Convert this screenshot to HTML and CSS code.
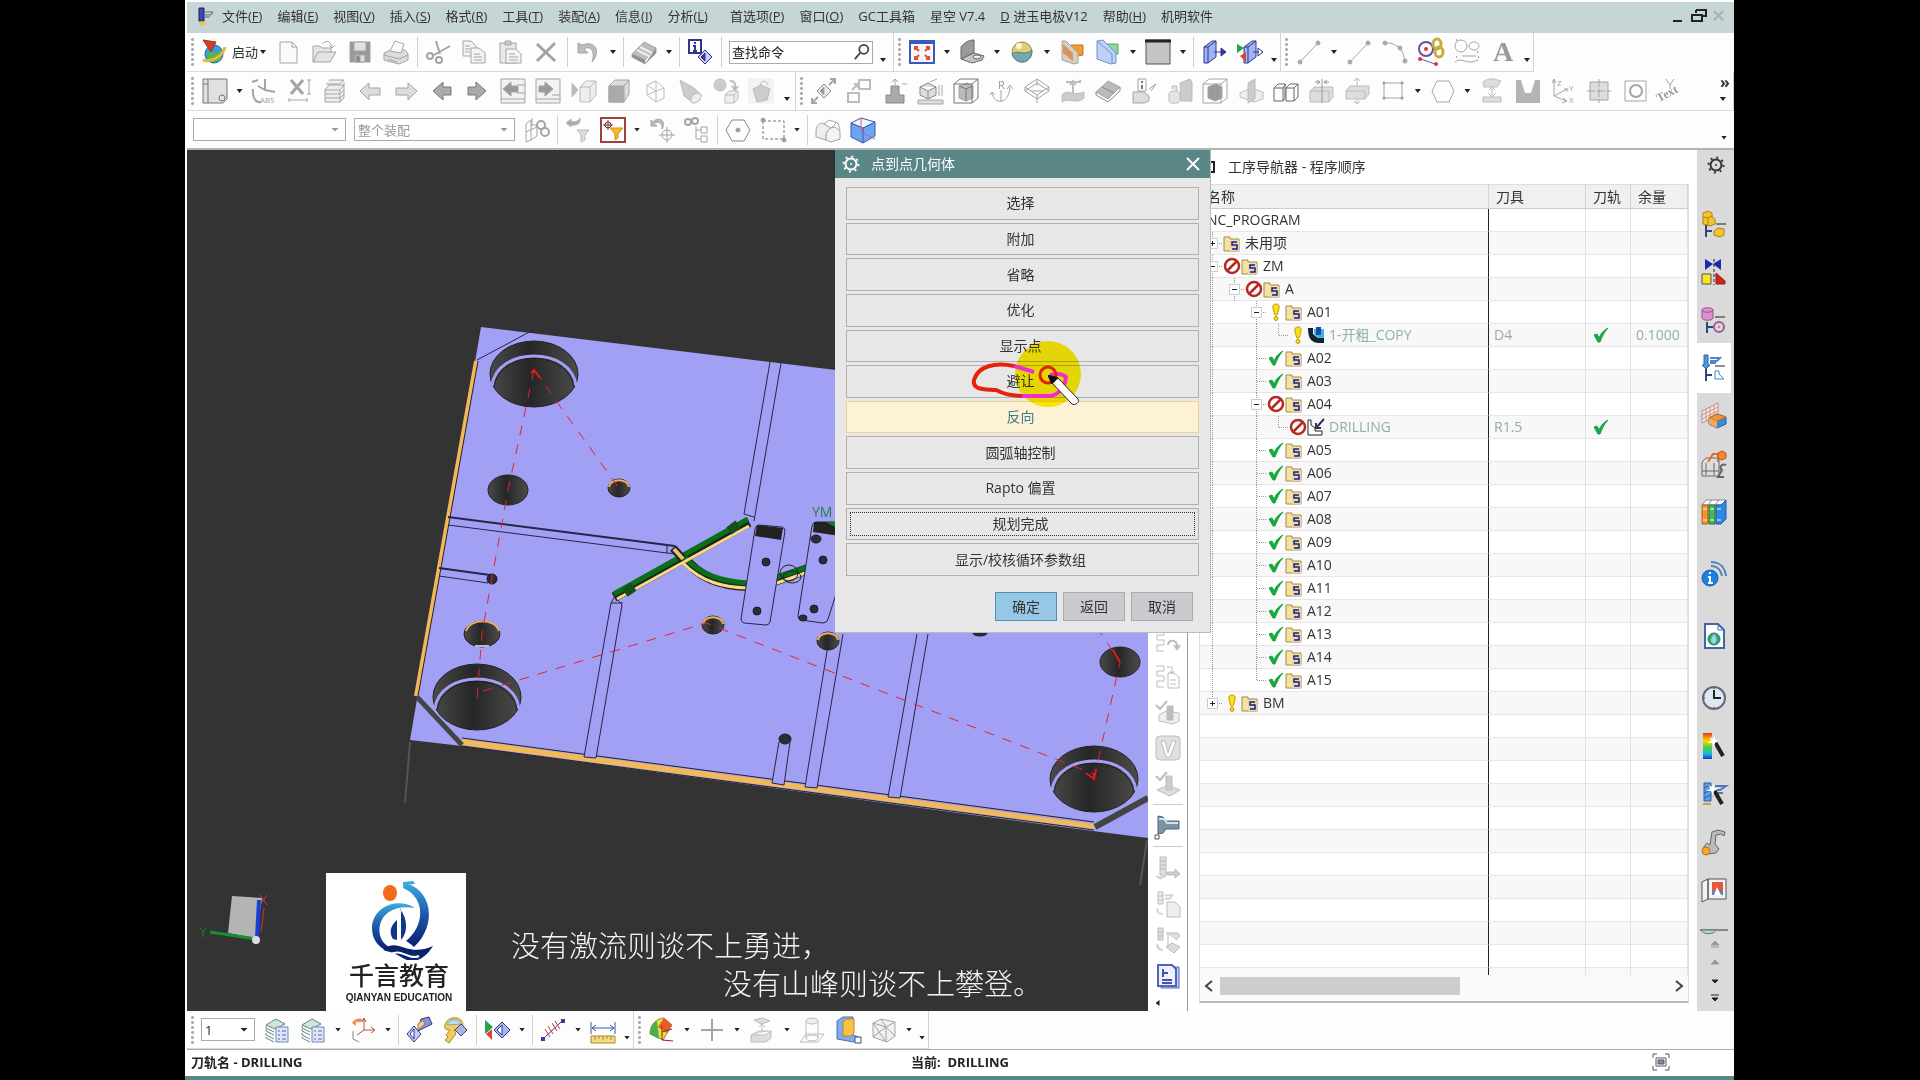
FILE: index.html
```html
<!DOCTYPE html>
<html lang="zh-CN">
<head>
<meta charset="utf-8">
<title>点到点几何体</title>
<link rel="stylesheet" href="styles.css">
</head>
<body>
<svg class="defs" aria-hidden="true">
  <defs>
    <linearGradient id="hole" x1="0" x2="1"><stop offset="0" stop-color="#4a4a4a"/><stop offset=".45" stop-color="#262626"/><stop offset="1" stop-color="#4c4c4c"/></linearGradient>
    <linearGradient id="arcblue" x1="0" y1="0" x2="0" y2="1"><stop offset="0" stop-color="#3fa9dc"/><stop offset=".5" stop-color="#1b58a8"/><stop offset="1" stop-color="#081f74"/></linearGradient>
    <linearGradient id="rainbow" x1="0" y1="0" x2="0" y2="1"><stop offset="0" stop-color="#e33a1c"/><stop offset=".3" stop-color="#ffd400"/><stop offset=".55" stop-color="#4ad03c"/><stop offset=".8" stop-color="#18b6e8"/><stop offset="1" stop-color="#1338c8"/></linearGradient>
    <g id="bighole"><ellipse rx="44" ry="33" fill="url(#hole)" stroke="#222"/><path d="M-42 12C-38-28 38-28 42 12" fill="none" stroke="#a2a0f4" stroke-width="3"/><path d="M-40 13C-34-25 34-25 40 13" fill="none" stroke="#222"/></g>
    <g id="midhole"><ellipse rx="20" ry="15" fill="url(#hole)" stroke="#222"/></g>
    <g id="smallhole"><ellipse rx="11" ry="9" fill="url(#hole)" stroke="#222"/><path d="M-10-1C-9-10 9-10 10-1" fill="none" stroke="#e8b060" stroke-width="2"/></g>
  </defs>
  <symbol id="folder" viewBox="0 0 18 18"><path d="M1 3h6v2h9v12H1z" fill="#f5e2a0" stroke="#a48a4c"/><path d="M7 7h9v10H7z" fill="#e8d9a4"/><path d="M14 8H9v3h5v4H9M10 11h4" fill="none" stroke="#1c1c8c" stroke-width="1.500"/></symbol>
  <symbol id="no" viewBox="0 0 18 18"><circle cx="9" cy="9" r="7" fill="#fff" stroke="#b82820" stroke-width="2.500"/><path d="M14 4L4 14" stroke="#b82820" stroke-width="2.500"/></symbol>
  <symbol id="warn" viewBox="0 0 18 18"><path d="M9 1c-5 0-3 5-1 11h2c2-6 4-11-1-11z" fill="#ffdf10" stroke="#b89a10"/><circle cx="9" cy="15.500" r="2" fill="#ffdf10" stroke="#b89a10"/></symbol>
  <symbol id="ok" viewBox="0 0 18 18"><path d="M2 9l3-1 2 4c2-5 5-8 9-10-4 4-6 9-8 14H6z" fill="#18a840" stroke="#18a840"/></symbol>
  <symbol id="g-line" viewBox="0 0 22 23"><path d="M11.500 0v23" stroke="#999" stroke-dasharray="1 1"/></symbol>
  <symbol id="g-tee" viewBox="0 0 22 23"><path d="M11.500 0v23M12 11.500h9" stroke="#999" stroke-dasharray="1 1"/></symbol>
  <symbol id="g-elbow" viewBox="0 0 22 23"><path d="M11.500 0v12M12 11.500h9" stroke="#999" stroke-dasharray="1 1"/></symbol>
  <symbol id="g-minus" viewBox="0 0 22 23"><path d="M11.500 0v23M12 11.500h9" stroke="#999" stroke-dasharray="1 1"/><path d="M6.500 6.500h10v10h-10z" fill="#fff" stroke="#ccc"/><path d="M9 11.500h5" stroke="#222"/></symbol>
  <symbol id="g-plus" viewBox="0 0 22 23"><path d="M11.500 0v12M12 11.500h9" stroke="#999" stroke-dasharray="1 1"/><path d="M6.500 6.500h10v10h-10z" fill="#fff" stroke="#ccc"/><path d="M9 11.500h5M11.500 9v5" stroke="#222"/></symbol>
  <symbol id="gear" viewBox="0 0 18 18"><circle cx="9" cy="9" r="5.500" fill="none" stroke="currentColor" stroke-width="2"/><circle cx="9" cy="9" r="7.500" fill="none" stroke="currentColor" stroke-width="2" stroke-dasharray="2 3.900"/><circle cx="9" cy="9" r="1" fill="currentColor"/></symbol>
  <symbol id="layers" viewBox="0 0 26 26"><path d="M2 8l10-6 9 5-10 5z" fill="#cde6da" stroke="#68847c"/><path d="M2 12v2l8 4M2 16v2l8 4M2 20v1l8 4M2 9v2l8 4" stroke="#68847c"/><path d="M12 10h12v15H12z" fill="#dde6fb" stroke="#7484ba"/><path d="M14 14h2m2 0h4m-8 4h2m2 0h4m-8 4h2m2 0h4" stroke="#5468a8"/></symbol>
  <symbol id="cyc" viewBox="0 0 26 26"><path d="M1 3h8v5H2v5h7v5H2v6h7"/></symbol>
</svg>

<div class="app">
  <nav class="menu">
    <svg class="ic app-mark"><path d="M3 2h5v13H3z" fill="#3448c8" stroke="#223"/><path d="M9 6h8l-2 3H9m0 2h5" stroke="#667"/><path d="M2 17l4-2 5 2-4 3z" fill="#e8c84c" stroke="none"/></svg>
    <button>文件(<u>F</u>)</button><button>编辑(<u>E</u>)</button><button>视图(<u>V</u>)</button><button>插入(<u>S</u>)</button><button>格式(<u>R</u>)</button><button>工具(<u>T</u>)</button><button>装配(<u>A</u>)</button><button>信息(<u>I</u>)</button><button>分析(<u>L</u>)</button><button class="wide">首选项(<u>P</u>)</button><button>窗口(<u>O</u>)</button><button>GC工具箱</button><button>星空 V7.4</button><button><u>D</u> 进玉电极V12</button><button>帮助(<u>H</u>)</button><button>机明软件</button>
    <span class="winctl"><svg viewBox="0 0 54 16" fill="none" stroke="#222" stroke-width="2"><path d="M1 13h9M24 2h10v6h-3M24 2v3"/><path d="M20 7h10v6H20z"/><path d="M42 3l9 9m0-9l-9 9" stroke="#a8b0b0"/></svg></span>
  </nav>

  <div class="bar">
    <div class="group">
      <span class="grip"></span>
      <button class="start"><svg class="ic" viewBox="0 0 26 26"><circle cx="13" cy="15" r="9" fill="#38a0dc" stroke="#1c6cb0"/><path d="M6 14c4-3 8 3 12-2l3 6c-4 7-12 6-14 2z" fill="#50b850" stroke="none"/><path d="M2 21c8 3 20-4 22-13" stroke="#f0b828" stroke-width="3"/><path d="M2 1l13 2-5 10z" fill="#d83c2c" stroke="#a82c20"/></svg>启动</button><button class="drop near"></button>
      <button class="t"><svg class="ic" viewBox="0 0 26 26"><path d="M5 3h12l5 5v16H5z" fill="#fafafa"/><path d="M17 3v5h5"/></svg></button>
      <button class="t"><svg class="ic" viewBox="0 0 26 26"><path d="M2 23V7h7l2 2h9v4M2 23l5-10h18l-6 10z" fill="#e4e4e4"/><path d="M11 5c5-5 9-2 10 3m-3-2l3 3 3-3"/></svg></button>
      <button class="t"><svg class="ic" viewBox="0 0 26 26"><path d="M3 3h20v20H3z" fill="#999"/><path d="M7 3h12v9H7z" fill="#e0e0e0"/><path d="M8 16h10v7H8z" fill="#ddd"/><path d="M9 17h4v6H9z" fill="#888"/></svg></button>
      <button class="t"><svg class="ic" viewBox="0 0 26 26"><path d="M1 14l7-3h14l3 4v6l-9 4-15-4z" fill="#ddd"/><path d="M7 12l5-10 9 3-3 9z" fill="#fafafa"/><path d="M1 16l15 4 9-4M5 20l9 3"/></svg></button>
      <i class="sep"></i>
      <button class="t"><svg class="ic thick" viewBox="0 0 26 26"><path d="M11 2l4 13M25 7L9 16"/><circle cx="5" cy="17" r="3"/><circle cx="14" cy="21" r="3"/></svg></button>
      <button class="t"><svg class="ic" viewBox="0 0 26 26"><path d="M2 2h8l5 5v10H2z" fill="#f4f4f4"/><path d="M10 9h8l6 5v10H10z" fill="#f4f4f4"/><path d="M4 7h5m-5 3h5m-5 3h5m4 2h6m-6 3h8m-8 3h8"/></svg></button>
      <button class="t"><svg class="ic" viewBox="0 0 26 26"><path d="M3 4h16v20H3z" fill="#e8e8e8"/><path d="M8 2h6v4H8z" fill="#ccc"/><path d="M9 10h10l5 5v9H9z" fill="#f4f4f4"/><path d="M12 15h6m-6 3h9m-9 3h9"/></svg></button>
      <button class="t"><svg class="ic" viewBox="0 0 26 26"><path d="M4 5l18 17M22 4L4 22" stroke-width="3"/></svg></button>
      <i class="sep"></i>
      <button class="t"><svg class="ic" viewBox="0 0 26 26"><path d="M3 4v10h10l-4-4c6-4 12 2 8 13 9-10 4-22-10-17z" fill="#bbb"/></svg></button><button class="drop"></button>
      <i class="sep"></i>
      <button class="t"><svg class="ic" viewBox="0 0 26 26"><path d="M1 15L13 3l12 6-11 12z" fill="#bdbdbd"/><path d="M1 15v3l13 7v-4L1 15m13 10l11-11V9" fill="#8c8c8c"/><path d="M6 11l12 6M9 8l12 6" stroke="#eee" stroke-width="2"/></svg></button><button class="drop"></button>
      <i class="sep"></i>
      <button class="t"><svg class="ic navy" viewBox="0 0 26 26"><path d="M2 1h12v13H2z" fill="#fff" stroke-width="2"/><path d="M8 3v2M6 7h2v5m-2 0h4" stroke-width="2"/><path d="M11 18l7-7 7 7-7 7z" fill="#c8ccf8"/><path d="M14 18l4-4v8z" fill="#3c3c9c"/></svg></button>
      <i class="sep"></i>
      <label class="find"><input type="text" value="查找命令" aria-label="查找命令"><svg viewBox="0 0 20 20" fill="none" stroke="#444" stroke-width="2"><circle cx="12" cy="7" r="5"/><path d="M8 11l-6 7"/></svg></label><button class="drop low"></button>
    </div>
    <div class="group">
      <span class="grip"></span>
      <button class="t"><svg class="ic" viewBox="0 0 26 26"><path d="M1 2h24v22H1z" fill="#f4f6ff" stroke="#3c58b8" stroke-width="2"/><path d="M1 3h24" stroke="#3c58b8" stroke-width="4"/><path d="M10 12L6 8m0 3V8h3m7 4l4-4m-3 0h3v3M10 16l-4 4m0-3v3h3m7-4l4 4m-3 0h3v-3" stroke="#e05020" stroke-width="2"/></svg></button><button class="drop"></button>
      <button class="t"><svg class="ic dark" viewBox="0 0 26 26"><path d="M2 8c4-5 8-7 13-7v13L2 20z" fill="#9a9a9a"/><path d="M2 20l13-6 10 3-2 4-10 3z" fill="#c4c4c4"/><ellipse cx="18" cy="18" rx="4" ry="2" fill="#eee"/></svg></button><button class="drop"></button>
      <button class="t"><svg class="ic" viewBox="0 0 26 26"><circle cx="13" cy="13" r="10" fill="#ddd070" stroke="#8c8c60"/><path d="M3 15c6-5 12 3 20-4 0 9-6 13-11 12s-8-4-9-8z" fill="#74a8b0" stroke="#607c80"/><circle cx="10" cy="7" r="3" fill="#fbf8d0" stroke="none"/></svg></button><button class="drop"></button>
      <button class="t"><svg class="ic" viewBox="0 0 26 26"><path d="M12 6h12v10l-10 2z" fill="#f09a38" stroke="#c87820"/><path d="M3 2h4l12 12v10l-4 1-12-4z" fill="#d8cfc4"/><path d="M4 5l10 9v8L4 14z" fill="#d89454" stroke="none"/></svg></button>
      <button class="t"><svg class="ic" viewBox="0 0 26 26"><path d="M11 5h12v10l-9 2z" fill="#8cd8a0" stroke="#4ca868"/><path d="M2 2l6-1 13 13v10l-5 1L2 20z" fill="#bcd0f8" stroke="#7890c8"/><path d="M2 2l15 13v9" stroke="#7890c8"/></svg></button><button class="drop"></button>
      <button class="t"><svg class="ic" viewBox="0 0 26 26"><path d="M1 1h24v24H1z" fill="#c4c4c4" stroke="#555"/><path d="M0 2h26" stroke="#222" stroke-width="3"/></svg></button><button class="drop"></button>
      <i class="sep"></i>
      <button class="t"><svg class="ic navy" viewBox="0 0 26 26"><path d="M3 8l8-6h4v16l-8 6H3z" fill="#9cb4f4"/><path d="M3 8h4v16M7 8l8-6" /><path d="M13 13h8M20 9l5 4-5 4z" fill="#3030c0"/></svg></button>
      <button class="t"><svg class="ic navy" viewBox="0 0 26 26"><path d="M7 8l8-6h4v16l-8 6H7z" fill="#9cb4f4"/><path d="M11 8v16M7 8h4l8-6M16 13h6M21 9l5 4-5 4z"/><path d="M0 5l7 4-7 5z" fill="#28a048" stroke="none"/><path d="M9 13l-6 4 6 6z" fill="#d84830" stroke="none"/></svg></button><button class="drop low slim"></button>
    </div>
    <div class="group">
      <span class="grip"></span>
      <button class="t"><svg class="ic" viewBox="0 0 26 26"><path d="M4 23L22 4"/><circle cx="4" cy="23" r="2" fill="#aaa"/><circle cx="22" cy="4" r="2" fill="#aaa"/></svg></button><button class="drop"></button>
      <button class="t"><svg class="ic" viewBox="0 0 26 26"><path d="M4 23L22 4"/><circle cx="4" cy="23" r="2" fill="#aaa"/><circle cx="22" cy="4" r="2" fill="#aaa"/></svg></button>
      <button class="t"><svg class="ic" viewBox="0 0 26 26"><path d="M2 4c12-1 20 6 21 19"/><circle cx="3" cy="4" r="2" fill="#aaa"/><circle cx="18" cy="9" r="2" fill="#aaa"/><circle cx="23" cy="22" r="2" fill="#aaa"/></svg></button>
      <button class="t"><svg class="ic" viewBox="0 0 26 26"><circle cx="8" cy="10" r="7" stroke="#6c4ca8" stroke-width="2"/><circle cx="8" cy="10" r="2" fill="#d03c30" stroke="none"/><ellipse cx="19" cy="5" rx="4" ry="5" stroke="#c8ac38" stroke-width="3"/><ellipse cx="21" cy="13" rx="4" ry="5" stroke="#c8ac38" stroke-width="3"/><path d="M3 20l14 5" stroke="#6c4ca8"/><circle cx="2" cy="20" r="2" fill="#d03c30" stroke="none"/><circle cx="18" cy="25" r="2" fill="#d03c30" stroke="none"/></svg></button>
      <button class="t"><svg class="ic" viewBox="0 0 26 26"><circle cx="7" cy="7" r="6"/><ellipse cx="20" cy="7" rx="5" ry="4"/><path d="M8 17h14M1 23c6-6 12 4 23-2" /><path d="M2 18h1m21 0h1M2 1h1m20 12h1" stroke-width="2"/></svg></button>
      <button class="t glyph-a">A</button><button class="drop low slim"></button>
    </div>
  </div>

  <div class="bar even">
    <div class="group first">
      <span class="grip"></span>
      <button class="t"><svg class="ic" viewBox="0 0 26 26"><path d="M1 1h24v20l-4 4H1z" fill="#e0e0e0" stroke="#777"/><path d="M6 1v24M1 6h5" stroke="#777"/><circle cx="20" cy="20" r="3" stroke="#777"/></svg></button><button class="drop"></button>
      <button class="t"><svg class="ic" viewBox="0 0 26 26"><path d="M14 1v11l10 2M14 12l-7-4M2 11c-1 9 3 14 8 13M1 4l6-2" stroke-width="2"/><text x="9" y="25" class="tiny">ABS</text></svg></button>
      <button class="t"><svg class="ic" viewBox="0 0 26 26"><path d="M4 2l12 14M16 2L4 16" stroke-width="3"/><path d="M22 2v14m-2-14h4m-4 14h4M2 22h18M2 20v4m18-4v4"/></svg></button>
      <button class="t"><svg class="ic" viewBox="0 0 26 26"><path d="M7 7h15l-4 5H3zM7 2h15l-4 4H4M3 12v4h15v-4m0 4l4-4M3 16v4h15v-4m0 4l4-4M3 20v4h15v-4m0 4l4-4V4" fill="#eee"/></svg></button>
      <button class="t"><svg class="ic" viewBox="0 0 26 26"><path d="M2 13l9-8v5h11v7H11v5z" fill="#ddd"/></svg></button>
      <button class="t"><svg class="ic" viewBox="0 0 26 26"><path d="M24 13l-9-8v5H3v7h12v5z" fill="#ddd"/></svg></button>
      <button class="t"><svg class="ic" viewBox="0 0 26 26"><path d="M4 13l10-9v5h8v8h-8v5z" fill="#aaa" stroke="#777"/></svg></button>
      <button class="t"><svg class="ic" viewBox="0 0 26 26"><path d="M22 13L12 4v5H4v8h8v5z" fill="#aaa" stroke="#777"/></svg></button>
      <button class="t"><svg class="ic" viewBox="0 0 26 26"><path d="M1 1h24v24H1zM1 21h24M17 7h8m-8 8h8" fill="#f2f2f2"/><path d="M3 11l8-7v4h7v6h-7v4z" fill="#999"/></svg></button>
      <button class="t"><svg class="ic" viewBox="0 0 26 26"><path d="M1 1h24v24H1zM1 21h24M17 17h8" fill="#f2f2f2"/><path d="M18 11l-8-7v4H4v6h6v4z" fill="#999"/></svg></button>
      <button class="t"><svg class="ic pale" viewBox="0 0 26 26"><path d="M1 5l6 7-6 7z" fill="#bbb"/><path d="M9 9l6-6h10v14l-6 7H9zM9 9h10v15m0-15l6-6" fill="#eee"/></svg></button>
      <button class="t"><svg class="ic" viewBox="0 0 26 26"><path d="M3 8l6-6h14v14l-5 8H3z" fill="#ddd"/><path d="M3 8h15v16H3z" fill="#aaa"/><path d="M18 8l5-6"/></svg></button>
      <button class="t"><svg class="ic pale" viewBox="0 0 26 26"><path d="M5 7l9-4 8 7v10l-8 4-9-7zM5 7l9 6 8-3m-8 3v11M14 3v10M5 17l9-4" /></svg></button>
      <button class="t"><svg class="ic pale" viewBox="0 0 26 26"><path d="M3 2l14 8 6 6-8 8-8-6z" fill="#ccc"/><ellipse cx="19" cy="20" rx="6" ry="4" transform="rotate(-40 19 20)" fill="#eee"/></svg></button>
      <button class="t"><svg class="ic pale" viewBox="0 0 26 26"><circle cx="7" cy="7" r="6" fill="#ccc"/><path d="M17 3c6 0 5 4 5 8m-3-3l3 4 3-4" stroke-width="2"/><path d="M12 17l4-4h9v8l-4 4h-9zM12 17h9v8m0-8l4-4" fill="#eee"/></svg></button>
      <button class="t"><svg class="ic pale" viewBox="0 0 26 26"><path d="M1 1h24v24H1z" fill="#f3f3f3" stroke="#eee"/><path d="M5 11l8-4 9 4-3 11-10 2z" fill="#ccc"/><path d="M12 8c0-6 7-6 8-1"/></svg></button><button class="drop low"></button>
    </div>
    <div class="group grow">
      <span class="grip"></span>
      <button class="t"><svg class="ic" viewBox="0 0 26 26"><path d="M6 13l7-7 7 7-7 7z" fill="#eee" stroke="#888"/><path d="M13 9v8l-4-4z" fill="#999"/><path d="M18 7l6-6m-5 0h5v5M7 19l-6 6m0-5v5h5" stroke-width="2"/></svg></button>
      <button class="t"><svg class="ic pale" viewBox="0 0 26 26"><path d="M13 2h11v9H13zM2 15h11v9H2zM6 12l6-6m-4 0h4v4" stroke-width="2"/></svg></button>
      <button class="t"><svg class="ic" viewBox="0 0 26 26"><path d="M9 8h8v9h5v8H4v-8h5z" fill="#aaa" stroke="#888"/><path d="M13 7V1m-3 3l3-3 3 3m4 2h5"/></svg></button>
      <button class="t"><svg class="ic" viewBox="0 0 26 26"><path d="M2 9l8-4 8 4v8l-8 4-8-4zM2 9l8 4 8-4m-8 4v8" fill="#ddd" stroke="#888"/><path d="M0 22h25v4H0z" fill="#ddd"/><path d="M12 4l7-3m2 6v11m3-11v11"/></svg></button>
      <button class="t"><svg class="ic" viewBox="0 0 26 26"><path d="M6 8l8-3 6 3v12l-7 3-7-3z" fill="#bbb"/><path d="M6 8l7 3 7-3m-7 3v12M1 6l6-5h18v19l-6 5H1zM1 6h18v19m0-19l6-5" stroke="#777"/></svg></button>
      <button class="t"><svg class="ic" viewBox="0 0 26 26"><text x="9" y="11" class="r">R</text><path d="M12 12v12M3 15c2 12 17 12 18-6m-3 2l3-4 3 4M1 17l2-3 3 3"/></svg></button>
      <button class="t"><svg class="ic" viewBox="0 0 26 26"><path d="M1 13l12-8 12 8-12 8zM1 9l12-8 12 8-12 8zM13 1v7m0 9v8M1 9v4m24-4v4M7 13h12"/></svg></button>
      <button class="t"><svg class="ic pale" viewBox="0 0 26 26"><path d="M2 17c6-7 9 2 22-3v6c-8 7-14-1-22 4z" fill="#ccc"/><path d="M13 15V4m-7 0h14v-2M10 7l3-4 3 4" stroke-width="2"/></svg></button>
      <button class="t"><svg class="ic" viewBox="0 0 26 26"><path d="M1 14L13 3l12 6-12 12z" fill="#bbb"/><path d="M1 14v3l12 7 12-11V9M7 9l12 6" stroke="#888"/></svg></button>
      <button class="t"><svg class="ic" viewBox="0 0 26 26"><path d="M7 1h8v12H7z"/><path d="M11 3v2m0 2v4" stroke="#777" stroke-width="2"/><path d="M2 14h11l5 4v5l-5 2H2zM18 11l7-5m-5 7l5-7" fill="#ddd"/></svg></button>
      <button class="t"><svg class="ic pale" viewBox="0 0 26 26"><path d="M13 5l10-4 2 3v19H14z" fill="#ccc"/><path d="M2 16c0-4 11-4 11 0v7c0 3-11 3-11 0zM5 11V8h5v5" fill="#e4e4e4"/></svg></button>
      <button class="t"><svg class="ic" viewBox="0 0 26 26"><path d="M6 9l8-3 6 3v11l-7 3-7-3z" fill="#999"/><path d="M1 6l6-5h18v19l-6 5H1zM1 6h18v19m0-19l6-5M13 12v11"/></svg></button>
      <button class="t"><svg class="ic pale" viewBox="0 0 26 26"><path d="M2 15l11-5 12 4v7l-9 3-14-5z" fill="#eee"/><path d="M10 5l7-4v20l-7 4z" fill="#ccc"/></svg></button>
      <button class="t"><svg class="ic dark" viewBox="0 0 26 26"><path d="M1 10l4-4h7v14l-2 3H1zM1 10h9v13m0-13l3-4M13 10l4-4h8v13l-4 4h-8zM13 10h8v13m0-13l4-4"/></svg></button>
      <button class="t"><svg class="ic pale" viewBox="0 0 26 26"><path d="M1 13l4-4h19v10l-4 5H1zM1 13h19v11" fill="#ddd"/><path d="M13 1v24M6 4h5m4 0h5M8 2l3 2-3 2m10-4l-3 2 3 2" stroke="#999"/></svg></button>
      <button class="t"><svg class="ic pale" viewBox="0 0 26 26"><path d="M2 13l4-5h19v8l-4 5H2zM2 13h19v8" fill="#ddd"/><path d="M13 0v8m-3-5l3-3 3 3m-3 18v5m-3-3l3 3 3-3"/></svg></button>
      <button class="t"><svg class="ic" viewBox="0 0 26 26"><path d="M4 5h18v15H4z"/><path d="M3 4h2v2H3zm18 0h2v2h-2zM3 19h2v2H3zm18 0h2v2h-2z" fill="#999"/></svg></button><button class="drop"></button>
      <button class="t"><svg class="ic" viewBox="0 0 26 26"><path d="M7 3h12l5 10-5 11H7L2 13z"/></svg></button><button class="drop"></button>
      <button class="t"><svg class="ic pale" viewBox="0 0 26 26"><path d="M4 4c6-5 12-3 18-1l-4 6H5zM4 19h18v5H4z" fill="#ddd"/><path d="M13 9v10m-4-4l4 4 4-4m-7-3l3-3 3 3"/></svg></button>
      <button class="t"><svg class="ic" viewBox="0 0 26 26"><path d="M1 2h5l4 13h6l4-13h5v23H1z" fill="#b4b4b4" stroke="none"/></svg></button>
      <button class="t"><svg class="ic" viewBox="0 0 26 26"><path d="M4 2v16l12 5M4 18l13-7M2 5l2-4 2 4m8 6h4l-2 3m-3 6l4 3-5 2"/><text x="7" y="8" class="tiny">Z</text><text x="19" y="13" class="tiny">Y</text><text x="19" y="25" class="tiny">X</text></svg></button>
      <button class="t"><svg class="ic" viewBox="0 0 26 26"><path d="M4 4h18v18H4z" fill="#ddd"/><path d="M13 1v24M1 13h24" stroke-dasharray="8 2"/></svg></button>
      <button class="t"><svg class="ic" viewBox="0 0 26 26"><path d="M3 3h21v20H3z"/><circle cx="14" cy="13" r="6" stroke-width="2"/></svg></button>
      <button class="t"><svg class="ic" viewBox="0 0 26 26"><text x="1" y="24" class="txt" transform="rotate(-28 2 22)">Text</text><path d="M9 1l4 6 4-6M13 7v4"/></svg></button>
      <span class="tail"><b>»</b><button class="drop"></button></span>
    </div>
  </div>

  <div class="bar filter">
    <label class="combo"><select aria-label="类型过滤器" disabled><option></option></select></label>
    <label class="combo scope"><select aria-label="选择范围" disabled><option>整个装配</option></select></label>
    <button class="t"><svg class="ic" viewBox="0 0 26 26"><path d="M2 7l5-4v20l-5 2zM7 8h6v11l-6 4M2 15l11-5M8 1v8"/><circle cx="17" cy="8" r="4" stroke-width="2"/><circle cx="21" cy="15" r="4" stroke-width="2"/></svg></button>
    <i class="sep"></i>
    <button class="t"><svg class="ic pale" viewBox="0 0 26 26"><path d="M6 2L1 6l5 4V8c7 1 10-2 9-7-2 4-6 4-9 3z" fill="#aaa"/><path d="M12 13h12l-4 5v5l-4 2v-7z" fill="#ddd"/></svg></button>
    <button class="t"><svg class="ic" viewBox="0 0 26 26"><path d="M1 1h24v24H1z" fill="#fff" stroke="#9c4040" stroke-width="2"/><path d="M8 3v10M3 8h10" stroke="#703030"/><circle cx="8" cy="8" r="3" stroke="#703030"/><path d="M10 11h13l-5 6v4l-3 2v-6z" fill="#f8b828" stroke="#d09020"/></svg></button><button class="drop"></button>
    <button class="t"><svg class="ic" viewBox="0 0 26 26"><path d="M2 3v6h6L5 7c4-4 9-1 8 5 5-9-4-13-9-7z" fill="#bbb"/><circle cx="18" cy="18" r="5"/><path d="M18 10v16M10 18h16"/></svg></button>
    <button class="t"><svg class="ic" viewBox="0 0 26 26"><circle cx="4" cy="5" r="3" stroke-width="2"/><circle cx="11" cy="4" r="3" stroke-width="2"/><path d="M12 9v13h5m-5-9h5m0-3h6v6h-6zm0 9h6v6h-6z"/></svg></button>
    <i class="sep"></i>
    <button class="t"><svg class="ic" viewBox="0 0 26 26"><path d="M7 3h12l6 10-6 11H7L1 13z" stroke="#888"/><circle cx="13" cy="13" r="2" fill="#999"/></svg></button>
    <button class="t"><svg class="ic" viewBox="0 0 26 26"><path d="M3 4h21v18H3z" stroke="#777" stroke-dasharray="3 2"/><circle cx="3" cy="3" r="2" fill="#999"/><circle cx="24" cy="23" r="2" fill="#999"/></svg></button><button class="drop"></button>
    <i class="sep"></i>
    <button class="t"><svg class="ic" viewBox="0 0 26 26"><path d="M1 13c1-6 5-8 8-6l7 4c-4 2-5 5-5 12l-10-3z" fill="#eee"/><path d="M11 23c0-7 1-10 5-12l4-1 5 4v8l-9 3z" fill="#f4f4f4"/><path d="M9 7l5-4 9 3 2 7m-9-2l5-5"/></svg></button>
    <button class="t"><svg class="ic" viewBox="0 0 26 26"><path d="M1 6v14l12 6 12-7V5L13 11z" fill="#6ca4f4" stroke="#3c58a8"/><path d="M1 6l10-5 14 4-12 6z" fill="#eef4ff" stroke="#3c58a8"/><path d="M13 11v15" stroke="#3c58a8"/><path d="M11 1v14l14 7" stroke="#d85878"/></svg></button>
    <span class="tail"><button class="drop"></button></span>
  </div>

  <main class="work">
    <section class="view">
      <svg class="model" viewBox="187 150 961 861" preserveAspectRatio="xMinYMin slice">
        <path d="M410 742l-5 61M1147 840l-7 45" stroke="#555" stroke-width="2"/>
        <path d="M481 327L1148 408V838L1093 831 462 746 410 740z" fill="#a2a0f4"/>
        <path d="M476 361L416 696" stroke="#f4b85c" stroke-width="4"/><path d="M478 361L418 696" stroke="#222"/>
        <path d="M462 739L1094 824v5L462 745z" fill="#f4b85c"/><path d="M462 738L1094 822M462 746l632 84" stroke="#222" fill="none"/>
        <path d="M417 697l45 48" stroke="#444" stroke-width="5"/><path d="M1095 827l53-29" stroke="#444" stroke-width="6"/>
        <g fill="none" stroke="#25254a">
          <path d="M477 360l30-16 26-14"/>
          <path d="M770 362L744 514M781 363L754 521M744 514l10 3"/>
          <path d="M448 517L675 546" stroke-width="2"/><path d="M448 525L667 553v-8m0 8l10 1"/>
          <path d="M439 568l51 7" stroke-width="2"/><path d="M439 576l49 7"/>
        </g>
        <g fill="#a2a0f4" stroke="#25254a">
          <path d="M611 603L584 757l12 1L622 605 615 596z"/><path d="M611 603h12"/>
          <path d="M828 645L805 787l12 1L843 634"/>
          <path d="M917 634L888 797l12 1L928 634"/>
          <path d="M779 742l-7 41 12 2 6-43"/>
        </g>
        <g fill="none">
          <path d="M614 597L749 522M682 556C700 578 720 585 747 586M774 581l34-12" stroke="#222" stroke-width="10"/>
          <path d="M614 594L748 519M684 557C702 576 722 581 747 583M774 578l34-11" stroke="#087018" stroke-width="5"/>
          <path d="M617 599L749 526M682 562C702 583 724 587 747 588M774 584l34-12" stroke="#f8dc84" stroke-width="3"/>
          <path d="M673 548l10 11" stroke="#222" stroke-width="8"/><path d="M674 549l9 10" stroke="#e8c470" stroke-width="4"/>
          <path d="M625 593l9-6M729 531l9-7" stroke="#14501c" stroke-width="9"/>
        </g>
        <ellipse cx="789" cy="573" rx="9" ry="8" fill="none" stroke="#222"/><ellipse cx="792" cy="577" rx="9" ry="6" fill="none" stroke="#222"/>
        <g fill="#a2a0f4" stroke="#25254a">
          <path d="M759 525l23 2q3 1 3 4l-15 91q-1 3-4 3l-22-2q-3-1-3-4l14-90q1-4 4-4z"/>
          <path d="M816 522h24v60l-12 37q-1 4-5 4l-22-3q-3-1-3-4l14-90q1-4 4-4z"/>
        </g>
        <path d="M757 525l26 3-2 12-26-4zM814 522h26v14l-27-4z" fill="#222"/><path d="M826 522h14v8z" fill="#0a8024"/>
        <g fill="#2c2c36" stroke="#1a1a2a"><ellipse cx="766" cy="562" rx="4" ry="4"/><ellipse cx="757" cy="611" rx="4" ry="4"/><ellipse cx="823" cy="560" rx="4" ry="4"/><ellipse cx="814" cy="609" rx="4" ry="4"/><ellipse cx="816" cy="539" rx="5" ry="4"/><ellipse cx="803" cy="618" rx="4" ry="3"/><ellipse cx="492" cy="579" rx="5" ry="5"/><ellipse cx="785" cy="739" rx="6" ry="5"/><ellipse cx="980" cy="633" rx="7" ry="3"/></g>
        <text x="812" y="517" class="axis">YM</text>
        <use href="#bighole" x="534" y="374"/><use href="#bighole" x="477" y="697"/><use href="#bighole" x="1094" y="779"/>
        <use href="#midhole" x="508" y="490"/><use href="#midhole" x="1120" y="662"/>
        <use href="#smallhole" x="619" y="488"/><use href="#smallhole" x="713" y="625"/><use href="#smallhole" x="828" y="641"/>
        <ellipse cx="482" cy="634" rx="18" ry="13" fill="url(#hole)" stroke="#222"/><path d="M466 631c4-13 29-13 33 0" fill="none" stroke="#e8b060" stroke-width="2"/><path d="M475 646h14" stroke="#bbb" stroke-width="2"/>
        <path d="M534 370L508 490 482 633 477 699M534 370L619 488M483 691L706 623 1094 774M1094 779L1120 662 1100 632" fill="none" stroke="#e02430" stroke-dasharray="10 9"/>
        <path d="M531 373l3-3 7 9M1086 773l8 6 2-10M1094 779v-6M1113 650l7 12" fill="none" stroke="#e01818" stroke-width="2"/>
        <path d="M232 896l30 2-6 40-28-5z" fill="#b4b4b4"/><path d="M210 932l46 7" stroke="#18902c" stroke-width="3"/><path d="M257 938l2-38" stroke="#1840d8" stroke-width="4"/><path d="M261 932l3-24m-4-13l7 10m0-10l-7 10" stroke="#c83838"/><path d="M200 928l3 4 3-4m-3 4v5" fill="none" stroke="#18902c"/><circle cx="256" cy="940" r="4" fill="#ddd"/>
      </svg>
      <div class="brand">
        <svg viewBox="0 0 140 84" fill="none"><ellipse cx="61" cy="17" rx="7" ry="8" fill="#f26a1c"/><path d="M75 7c28 5 34 42 10 64-3-3-5-4-8-6 18-14 21-43-3-53z" fill="url(#arcblue)"/><path d="M74 6l10-1 2 3-12 1z" fill="#3fa9dc"/><path d="M86 32C66 20 43 33 43 52c0 11 6 19 14 22l3-3c-17-9-13-45 26-39z" fill="url(#arcblue)"/><path d="M71 33c8 10 8 24 1 31V33zM68 44c-7 6-8 13-4 19l4 1z" fill="#12358c"/><path d="M54 74c15-14 23 8 50-4-10 16-22 18-32 11-6-4-11-5-18-7z" fill="#08246f"/><path d="M60 79c12-8 20 6 30 1" stroke="#fff" stroke-width="2"/></svg>
        <strong>千言教育</strong><span>QIANYAN EDUCATION</span>
      </div>
      <p class="motto">没有激流则谈不上勇进，</p>
      <p class="motto second">没有山峰则谈不上攀登。</p>
    </section>

    <div class="side-tools">
      <button class="t"><svg class="ic pale"><use href="#cyc"/><path d="M13 18c0-6 10-6 9 2m-3-2l3 4 3-4" stroke-width="2"/></svg></button>
      <button class="t"><svg class="ic pale"><use href="#cyc"/><path d="M13 10h6l5 4v11H13zM12 4h5v6m-2-2l2 3 2-3M15 17h6m-6 4h6"/></svg></button>
      <button class="t"><svg class="ic pale"><path d="M1 6l4 4 7-8" stroke-width="2"/><path d="M4 16l7-4 13 2v8l-6 3-14-3z" fill="#eee"/><path d="M12 7h6v14h-6z" fill="#bbb"/></svg></button>
      <button class="t"><svg class="ic pale"><rect x="1" y="1" width="24" height="24" rx="4" fill="#e0e0e0"/><path d="M6 6h4l3 12 4-12h4l-6 16h-4z" fill="#fff"/></svg></button>
      <button class="t"><svg class="ic pale"><path d="M1 5l4 4 7-8" stroke-width="2"/><path d="M2 19l11-5 12 5-10 6z" fill="#ddd"/><path d="M11 5h6v14h-6z" fill="#ccc"/></svg></button>
      <i class="rule"></i>
      <button class="t"><svg class="ic"><path d="M3 3l5 1 3 4h13v8H11l-3 4-5 1z" fill="#7894a4" stroke="#506874"/><path d="M4 6h5l3 4h11" stroke="#d4e4ec" stroke-width="2"/><path d="M0 22h4v4H0z" stroke="#555"/></svg></button>
      <i class="rule"></i>
      <button class="t"><svg class="ic pale"><path d="M5 2h6v18H5zM5 6h6m-6 4h6m-6 4h6M1 21l4 3 6-3" fill="#ddd"/><path d="M12 17h8v-3l5 5-5 4v-3h-8z" fill="#ccc"/></svg></button>
      <button class="t"><svg class="ic pale"><path d="M3 1h5v12H3zM3 5h5m-5 4h5m2-5h8l-3 4h-5M2 17c0 6 2 6 6 6M12 11h8l5 5v10H12z" fill="#eee"/></svg></button>
      <button class="t"><svg class="ic pale"><path d="M3 1h5v12H3zM3 5h5m-5 4h5m5-3v14m-2-14h12l2 3-4 4M2 17c0 6 2 6 6 6M11 20l6-4 8 4-6 6z" fill="#ddd"/></svg></button>
      <button class="t"><svg class="ic"><path d="M6 4h18v21H6z" fill="#c4ccf0" stroke="#5064b8"/><path d="M3 2h14l4 4v17H3z" fill="#eef0ff" stroke="#5064b8" stroke-width="2"/><path d="M8 6v8m0-4h5m-6 7h10m-10 3h10" stroke="#4054a8" stroke-width="2"/></svg></button>
      <span class="back"></span>
    </div>

    <section class="navigator">
      <h2><svg viewBox="0 0 12 14" fill="none" stroke="#222" stroke-width="2"><path d="M1 2h9v10H1z"/></svg>工序导航器 - 程序顺序</h2>
      <div class="grid">
        <div class="rows">
        <table>
          <colgroup><col><col class="c-tool"><col class="c-path"><col class="c-stock"></colgroup>
          <thead><tr><th>名称</th><th>刀具</th><th>刀轨</th><th>余量</th></tr></thead>
          <tbody>
            <tr><td><div class="node root">NC_PROGRAM</div></td><td></td><td></td><td></td></tr>
            <tr><td><div class="node"><svg class="g"><use href="#g-plus"/></svg><svg class="s"><use href="#folder"/></svg>未用项</div></td><td></td><td></td><td></td></tr>
            <tr><td><div class="node"><svg class="g"><use href="#g-minus"/></svg><svg class="s"><use href="#no"/></svg><svg class="s"><use href="#folder"/></svg>ZM</div></td><td></td><td></td><td></td></tr>
            <tr><td><div class="node"><svg class="g"><use href="#g-line"/></svg><svg class="g"><use href="#g-minus"/></svg><svg class="s"><use href="#no"/></svg><svg class="s"><use href="#folder"/></svg>A</div></td><td></td><td></td><td></td></tr>
            <tr><td><div class="node"><svg class="g"><use href="#g-line"/></svg><i class="g"></i><svg class="g"><use href="#g-minus"/></svg><svg class="s"><use href="#warn"/></svg><svg class="s"><use href="#folder"/></svg>A01</div></td><td></td><td></td><td></td></tr>
            <tr class="op"><td><div class="node"><svg class="g"><use href="#g-line"/></svg><i class="g"></i><svg class="g"><use href="#g-line"/></svg><svg class="g"><use href="#g-elbow"/></svg><svg class="s"><use href="#warn"/></svg><svg class="s" viewBox="0 0 18 18"><path d="M1 2h5v6l5 4h6v5h-6C4 16 1 12 1 2z" fill="#123"/><path d="M7 3h10v9h-6L7 8z" fill="#38b8e8"/><path d="M9 1h5v8H9z" fill="#1c48a8"/></svg>1-开粗_COPY</div></td><td>D4</td><td><svg class="s"><use href="#ok"/></svg></td><td>0.1000</td></tr>
            <tr><td><div class="node"><svg class="g"><use href="#g-line"/></svg><i class="g"></i><svg class="g"><use href="#g-tee"/></svg><svg class="s"><use href="#ok"/></svg><svg class="s"><use href="#folder"/></svg>A02</div></td><td></td><td></td><td></td></tr>
            <tr><td><div class="node"><svg class="g"><use href="#g-line"/></svg><i class="g"></i><svg class="g"><use href="#g-tee"/></svg><svg class="s"><use href="#ok"/></svg><svg class="s"><use href="#folder"/></svg>A03</div></td><td></td><td></td><td></td></tr>
            <tr><td><div class="node"><svg class="g"><use href="#g-line"/></svg><i class="g"></i><svg class="g"><use href="#g-minus"/></svg><svg class="s"><use href="#no"/></svg><svg class="s"><use href="#folder"/></svg>A04</div></td><td></td><td></td><td></td></tr>
            <tr class="op"><td><div class="node"><svg class="g"><use href="#g-line"/></svg><i class="g"></i><svg class="g"><use href="#g-line"/></svg><svg class="g"><use href="#g-elbow"/></svg><svg class="s"><use href="#no"/></svg><svg class="s" viewBox="0 0 18 18"><path d="M1 2h3v5l4 3v3h7v4H1z" fill="#fff" stroke="#222" stroke-width="1"/><path d="M17 1L9 10m0-5v5h5" fill="none" stroke="#335" stroke-width="2"/></svg>DRILLING</div></td><td>R1.5</td><td><svg class="s"><use href="#ok"/></svg></td><td></td></tr>
            <tr><td><div class="node"><svg class="g"><use href="#g-line"/></svg><i class="g"></i><svg class="g"><use href="#g-tee"/></svg><svg class="s"><use href="#ok"/></svg><svg class="s"><use href="#folder"/></svg>A05</div></td><td></td><td></td><td></td></tr>
            <tr><td><div class="node"><svg class="g"><use href="#g-line"/></svg><i class="g"></i><svg class="g"><use href="#g-tee"/></svg><svg class="s"><use href="#ok"/></svg><svg class="s"><use href="#folder"/></svg>A06</div></td><td></td><td></td><td></td></tr>
            <tr><td><div class="node"><svg class="g"><use href="#g-line"/></svg><i class="g"></i><svg class="g"><use href="#g-tee"/></svg><svg class="s"><use href="#ok"/></svg><svg class="s"><use href="#folder"/></svg>A07</div></td><td></td><td></td><td></td></tr>
            <tr><td><div class="node"><svg class="g"><use href="#g-line"/></svg><i class="g"></i><svg class="g"><use href="#g-tee"/></svg><svg class="s"><use href="#ok"/></svg><svg class="s"><use href="#folder"/></svg>A08</div></td><td></td><td></td><td></td></tr>
            <tr><td><div class="node"><svg class="g"><use href="#g-line"/></svg><i class="g"></i><svg class="g"><use href="#g-tee"/></svg><svg class="s"><use href="#ok"/></svg><svg class="s"><use href="#folder"/></svg>A09</div></td><td></td><td></td><td></td></tr>
            <tr><td><div class="node"><svg class="g"><use href="#g-line"/></svg><i class="g"></i><svg class="g"><use href="#g-tee"/></svg><svg class="s"><use href="#ok"/></svg><svg class="s"><use href="#folder"/></svg>A10</div></td><td></td><td></td><td></td></tr>
            <tr><td><div class="node"><svg class="g"><use href="#g-line"/></svg><i class="g"></i><svg class="g"><use href="#g-tee"/></svg><svg class="s"><use href="#ok"/></svg><svg class="s"><use href="#folder"/></svg>A11</div></td><td></td><td></td><td></td></tr>
            <tr><td><div class="node"><svg class="g"><use href="#g-line"/></svg><i class="g"></i><svg class="g"><use href="#g-tee"/></svg><svg class="s"><use href="#ok"/></svg><svg class="s"><use href="#folder"/></svg>A12</div></td><td></td><td></td><td></td></tr>
            <tr><td><div class="node"><svg class="g"><use href="#g-line"/></svg><i class="g"></i><svg class="g"><use href="#g-tee"/></svg><svg class="s"><use href="#ok"/></svg><svg class="s"><use href="#folder"/></svg>A13</div></td><td></td><td></td><td></td></tr>
            <tr><td><div class="node"><svg class="g"><use href="#g-line"/></svg><i class="g"></i><svg class="g"><use href="#g-tee"/></svg><svg class="s"><use href="#ok"/></svg><svg class="s"><use href="#folder"/></svg>A14</div></td><td></td><td></td><td></td></tr>
            <tr><td><div class="node"><svg class="g"><use href="#g-line"/></svg><i class="g"></i><svg class="g"><use href="#g-elbow"/></svg><svg class="s"><use href="#ok"/></svg><svg class="s"><use href="#folder"/></svg>A15</div></td><td></td><td></td><td></td></tr>
            <tr><td><div class="node"><svg class="g"><use href="#g-plus"/></svg><svg class="s"><use href="#warn"/></svg><svg class="s"><use href="#folder"/></svg>BM</div></td><td></td><td></td><td></td></tr>
            <tr><td></td><td></td><td></td><td></td></tr><tr><td></td><td></td><td></td><td></td></tr><tr><td></td><td></td><td></td><td></td></tr><tr><td></td><td></td><td></td><td></td></tr><tr><td></td><td></td><td></td><td></td></tr><tr><td></td><td></td><td></td><td></td></tr><tr><td></td><td></td><td></td><td></td></tr><tr><td></td><td></td><td></td><td></td></tr><tr><td></td><td></td><td></td><td></td></tr><tr><td></td><td></td><td></td><td></td></tr><tr><td></td><td></td><td></td><td></td></tr><tr><td></td><td></td><td></td><td></td></tr>
          </tbody>
        </table>
        </div>
        <div class="hscroll"><svg viewBox="0 0 10 12"><path d="M8 1L2 6l6 5"/></svg><i></i><svg viewBox="0 0 10 12"><path d="M2 1l6 5-6 5"/></svg></div>
      </div>
    </section>

    <aside class="tabs">
      <button class="opt"><svg class="gearic"><use href="#gear"/></svg></button>
      <button><svg class="ic" viewBox="0 0 26 26"><path d="M2 2l5-2 4 2v4l3 2v5l-5 2-7-2z" fill="#f4c428" stroke="#a88418"/><path d="M2 6l5 1v7m0-7l4-2" stroke="#a88418"/><path d="M15 13h10" stroke="#222"/><path d="M5 14v12m0-6h6" stroke="#2c4878" stroke-width="2"/><path d="M13 20l4-3 6 1v6l-4 2-6-2z" fill="#f4c428" stroke="#a88418"/></svg></button>
      <button><svg class="ic" viewBox="0 0 26 26"><path d="M4 0l8 5-8 6zM20 0l-8 5 8 6z" fill="#1c28b8" stroke="none"/><path d="M13 0v26" stroke="#222" stroke-dasharray="3 2"/><path d="M1 15h9v10H1z" fill="#f8e420" stroke="#554"/><path d="M15 14l9 8v3h-9z" fill="#d82018" stroke="#822"/></svg></button>
      <button><svg class="ic" viewBox="0 0 26 26"><path d="M1 3c0-3 11-3 11 0v8c0 3-11 3-11 0z" fill="#dc90cc" stroke="#985090"/><path d="M1 3c0 3 11 3 11 0" stroke="#985090"/><path d="M14 10h10" stroke="#222"/><path d="M6 15v11m0-6h6" stroke="#2c4878" stroke-width="2"/><circle cx="18" cy="20" r="5" stroke="#a85898" stroke-width="2"/><circle cx="18" cy="20" r="1" fill="#a85898"/></svg></button>
      <button class="active"><svg class="ic" viewBox="0 0 26 26"><path d="M3 0h4v10h2l-4 4-4-4h2z" fill="#4c98dc" stroke="#2868a8"/><path d="M9 3h10l-3 3H9m0 2h6" stroke="#4c88c8" stroke-width="2"/><path d="M14 11h10" stroke="#222"/><path d="M5 14v12m0-6h6" stroke="#2c4878" stroke-width="2"/><path d="M14 16h4v3l5 5h-9z" stroke="#3c88c8"/></svg></button>
      <button><svg class="ic" viewBox="0 0 26 26"><path d="M1 8l16-8v12L1 20z" fill="#f6e8dc" stroke="#a890b8"/><path d="M1 12l16-8M1 16l16-8M5 6v12m4-14v12m4-14v12" stroke="#d89070"/><path d="M8 15l8-4 9 3v7l-9 4-8-4z" fill="#3c88dc" stroke="#2c58a8"/><path d="M8 15l8-4 9 3-9 4z" fill="#f09430" stroke="#c07020"/><path d="M8 15v6l8 4v-7z" fill="#f4a850" stroke="none"/></svg></button>
      <button><svg class="ic dark" viewBox="0 0 26 26"><path d="M1 11l4-4h13v18H1zM5 12v12m8-12v12M1 20h17" fill="#ddd"/><path d="M7 11l5-8h5v8" stroke="#e07030" stroke-width="2"/><path d="M17 2l4-2 4 2v5l-4 2-4-2z" fill="#f48830" stroke="#b05818"/><path d="M25 14c-5-2-7 3-4 5l-4 7h6" stroke-width="2"/></svg></button>
      <button><svg class="ic" viewBox="0 0 26 26"><path d="M1 6l4-5h20l-5 5z" fill="#fff" stroke="#889"/><path d="M7 6l4-5M14 6l4-5" stroke="#889"/><path d="M1 6h6v19H1z" fill="#f49428" stroke="#a86418"/><path d="M8 6h6v19H8z" fill="#48b850" stroke="#287030"/><path d="M15 6h5l5-5v19l-5 5h-5z" fill="#2c88e4" stroke="#1c58a8"/><path d="M2 10h4m3 0h4m3 0h4M2 21h4m3 0h4m3 0h4" stroke="#fff"/></svg></button>
      <button class="apart"><svg class="ic" viewBox="0 0 26 26"><circle cx="9" cy="17" r="8" fill="#1c80e0" stroke="#1860a8"/><path d="M9 11v2m-2 3h2v6m-2 0h5" stroke="#fff" stroke-width="2"/><path d="M10 5c6 0 10 4 11 10M10 1c9 0 14 6 15 14" stroke="#5080c0" stroke-width="2"/></svg></button>
      <button class="apart"><svg class="ic" viewBox="0 0 26 26"><path d="M4 1h13l6 6v18H4z" fill="#fff" stroke="#3c68a8" stroke-width="2"/><path d="M17 1v6h6" stroke="#3c68a8"/><circle cx="13" cy="16" r="6" fill="#38a868" stroke="#287080"/><path d="M13 11c-4 5-4 8 0 10 4-3 3-6 0-10z" fill="#98d4f0" stroke="none"/></svg></button>
      <button class="apart"><svg class="ic" viewBox="0 0 26 26"><circle cx="13" cy="13" r="11" fill="#dce8f4" stroke="#667" stroke-width="2"/><path d="M13 5v8h7" stroke="#222" stroke-width="2"/><path d="M13 3v1m0 18v1M3 13h1" stroke="#222"/></svg></button>
      <button><svg class="ic" viewBox="0 0 26 26"><path d="M2 0h9v26H2z" fill="url(#rainbow)" stroke="none"/><path d="M14 9l8 14" stroke="#222" stroke-width="4"/><path d="M9 4l3 2 2-4 0 5 4 1-4 2-1 4-2-4-5 0 4-2z" fill="#fff" stroke="none"/></svg></button>
      <button><svg class="ic" viewBox="0 0 26 26"><path d="M3 2h7v18H3zM3 7l7-3M3 12l7-3m-7 8l7-3" fill="#58a0e4" stroke="#2c60a8"/><path d="M14 5h11l-6 4h-5m3 3h5" stroke="#4c78b8" stroke-width="2"/><path d="M13 9l8 14" stroke="#222" stroke-width="4"/><path d="M8 4l3 2 2-4 0 5 4 1-4 2-1 4-2-4-5 0 4-2z" fill="#fff" stroke="none"/><path d="M2 23h8" stroke="#b8a848" stroke-width="2"/></svg></button>
      <button><svg class="ic" viewBox="0 0 26 26"><path d="M11 3l6-2 7 2-1 4-3-2-5 1-1 9 4 5-3 4-9 1-4-6 4-5 3 2z" fill="#bbb" stroke="#666"/><circle cx="5" cy="22" r="4" fill="#f4a838" stroke="#b07818"/></svg></button>
      <button><svg class="ic" viewBox="0 0 26 26"><path d="M1 5l6-3v20l-6 3zM7 2h18v20H7z" fill="#f4f4f4" stroke="#555"/><path d="M11 5h11v13H11z" fill="#4888d0" stroke="none"/><path d="M11 5h11v7l-3 4-3-6-5 6z" fill="#e85838" stroke="none"/><path d="M13 18l3-8 4 8z" fill="#fff" stroke="none"/></svg></button>
      <svg class="overflow" viewBox="0 0 36 90"><path d="M3 16h28" stroke="#888" stroke-width="2"/><path d="M4 16c2 5 13 5 15 0z" fill="#bcd" stroke="#586"/><path d="M14 31l4-4 4 4zM14 33h8M14 50l4-4 4 4z" fill="#999" stroke="#999"/><path d="M15 66l3 3 3-3zM15 84l3 3 3-3zM14 81h8" fill="#222" stroke="#222"/></svg>
    </aside>
  </main>

  <div class="bar bottom">
    <div class="group">
      <span class="grip"></span>
      <label class="combo layer"><select aria-label="工作图层"><option>1</option></select></label>
      <button class="t"><svg class="ic"><use href="#layers"/></svg></button><button class="t"><svg class="ic"><use href="#layers"/></svg></button><button class="drop"></button>
      <button class="t"><svg class="ic" viewBox="0 0 26 26"><path d="M2 6c3-5 7-5 11-4l-2 3H6v4z" fill="#e89060" stroke="none"/><path d="M14 13V2m0 11l10 0m-10 0l-7 5m5-13l2-4 2 4m5 5l4 3-4 3" stroke="#b85040"/><path d="M3 14v8l6 3" stroke="#888"/></svg></button><button class="drop"></button>
      <i class="sep"></i>
      <button class="t"><svg class="ic navy" viewBox="0 0 26 26"><path d="M1 17l7-8 7 8-7 8z" fill="#c4d0f4"/><path d="M4 17l4-5v10z" fill="#fff"/><path d="M15 2l8-2 3 7-8 4-6 3z" fill="#8098d8"/><path d="M12 7l5-4 2 4-7 6z" fill="#f4c890" stroke="#a07840"/></svg></button>
      <button class="t"><svg class="ic" viewBox="0 0 26 26"><path d="M3 8C5-1 19-2 21 7c0 4-5 6-9 6l2 4-7 9-4-3 3-3-2-2 4-5C3 13 2 11 3 8z" fill="#f0cc58" stroke="#a88830"/><path d="M5 8c2-7 12-7 14-1z" fill="#b8dcf0" stroke="#88a8b8"/><path d="M13 13l6-6 6 6-6 6z" fill="#a8b4e8" stroke="#446"/></svg></button>
      <i class="sep"></i>
      <button class="t"><svg class="ic navy" viewBox="0 0 26 26"><path d="M1 3l8 7-8 7z" fill="#28a048" stroke="none"/><path d="M8 12l-6 5 6 6z" fill="#d84830" stroke="none"/><path d="M10 13l8-8 8 8-8 8z" fill="#a8b8f0"/><path d="M18 8v10l-5-5z" fill="#fff"/></svg></button><button class="drop"></button>
      <i class="sep"></i>
      <button class="t"><svg class="ic" viewBox="0 0 26 26"><path d="M3 22L22 4" stroke="#3c3c9c"/><path d="M5 12l5 8m-2-11l5 8M12 6l5 8M15 4l5 8" stroke="#c83c38"/><path d="M1 20h4v4H1zM21 2h4v4h-4z" fill="#3c3c9c" stroke="none"/></svg></button><button class="drop"></button>
      <button class="t"><svg class="ic" viewBox="0 0 26 26"><path d="M1 5v12M25 5v12M2 11h22M6 8l-4 3 4 3m14-6l4 3-4 3" stroke="#3858a8"/><path d="M1 19h24v7H1zM5 19v4m4-4v3m4-3v4m4-4v3m4-3v4" fill="#f4dc80" stroke="#a88c30"/></svg></button><button class="drop low slim"></button>
    </div>
    <div class="group">
      <span class="grip"></span>
      <button class="t"><svg class="ic" viewBox="0 0 26 26"><path d="M1 17C1 7 8 1 15 1l8 7-9 15z" fill="#e8dc38" stroke="#885"/><path d="M1 17c0-7 3-11 7-13l2 18z" fill="#48b048" stroke="none"/><path d="M15 1l8 7-5 8-9-6z" fill="#e85c28" stroke="none"/><path d="M13 9v14l11 1M13 15l10-3" stroke="#922"/></svg></button><button class="drop"></button>
      <button class="t"><svg class="ic" viewBox="0 0 26 26"><path d="M13 2v22M2 13h22" stroke-width="2"/></svg></button><button class="drop"></button>
      <button class="t"><svg class="ic pale" viewBox="0 0 26 26"><path d="M5 3l9-2 7 3-9 3zM2 18l8-4h12v7l-5 4H2zM2 18h14l6-4" fill="#ddd"/><path d="M13 7v8m-3-5l3-3 3 3"/></svg></button><button class="drop"></button>
      <button class="t"><svg class="ic pale" viewBox="0 0 26 26"><ellipse cx="13" cy="4" rx="6" ry="3" fill="#eee"/><path d="M7 4v17m12-17v17M1 25l6-8h18l-6 8z"/><ellipse cx="13" cy="21" rx="6" ry="3"/></svg></button>
      <button class="t"><svg class="ic" viewBox="0 0 26 26"><path d="M2 4l6-4h10v18l8 3-7 4-17-3z" fill="#80acec" stroke="#4870b0"/><path d="M8 5l3-3h8v14l-3 3H8z" fill="#f8c044" stroke="#b88820"/><path d="M20 20h6v6h-6z" fill="#fff" stroke="#448"/></svg></button>
      <button class="t"><svg class="ic" viewBox="0 0 26 26"><path d="M2 6l8-4 14 3v14l-8 6-14-5z" fill="#f0f0f0"/><path d="M2 6l13 4 9-5M15 10v15M2 6l13 19M10 2l5 8 9 9M2 20l13-10"/></svg></button><button class="drop"></button><button class="drop low slim"></button>
    </div>
  </div>

  <footer class="status"><span>刀轨名 - DRILLING</span><span>当前:&nbsp; DRILLING</span><svg viewBox="0 0 18 18" fill="none" stroke="#556"><path d="M1 5V1h4m8 0h4v4m0 8v4h-4m-8 0H1v-4M4 5h10v8H4z"/><path d="M6 7h6v4H6z" fill="#889"/></svg></footer>

  <section class="dialog" role="dialog" aria-label="点到点几何体">
    <header><svg class="gearic"><use href="#gear"/></svg><h1>点到点几何体</h1><button class="close" aria-label="关闭"><svg viewBox="0 0 16 16"><path d="M2 2l12 12M14 2L2 14" stroke="#fff" stroke-width="2"/></svg></button></header>
    <div class="choices">
      <button>选择</button><button>附加</button><button>省略</button><button>优化</button><button>显示点</button><button>避让</button><button class="hot">反向</button><button>圆弧轴控制</button><button>Rapto 偏置</button><button class="focus">规划完成</button><button>显示/校核循环参数组</button>
    </div>
    <div class="actions"><button class="primary">确定</button><button>返回</button><button>取消</button></div>
    <svg class="spot" viewBox="0 0 70 70"><circle cx="35" cy="35" r="33" fill="#fbec06"/></svg>
    <svg class="ink" viewBox="970 335 110 75" fill="none" stroke-linecap="round" stroke-linejoin="round" stroke-width="4"><path d="M1014 366C995 362 978 366 974 380c-2 10 10 9 22 10 8 4 12 5 26 6" stroke="#e8200c"/><path d="M1014 366l20 6M1022 396h28c8-1 15-8 16-19-4-4-10-3-16-2" stroke="#f02cd0" stroke-linecap="butt"/><circle cx="1048" cy="375" r="8" stroke="#e8200c" stroke-width="3"/><path d="M1049 376l9 2 20 21c2 3-3 7-6 5l-20-21z" fill="#fff" stroke="#222" stroke-width="1"/><path d="M1049 376l8 2-5 5z" fill="#111" stroke="#111" stroke-width="2"/></svg>
  </section>
</div>
</body>
</html>
```

FILE: styles.css
```css
* { box-sizing: border-box; }

body {
  margin: 0;
  background: #000;
  color: #333;
  font: 14px/20px "Open Sans", "Noto Sans CJK SC", sans-serif;
}

button {
  margin: 0;
  padding: 0;
  border: 0;
  background: none;
  color: inherit;
  font: inherit;
}

h1, h2, p { margin: 0; font-size: 14px; font-weight: 400; }
svg { display: block; flex: none; }
.defs { position: absolute; width: 0; height: 0; }

.app {
  position: relative;
  display: flex;
  flex-direction: column;
  height: 100vh;
  margin: 0 186px 0 185px;
  padding-left: 2px;
  background: #fff;
  border-bottom: 4px solid #5b8687;
}

.ic { width: 26px; height: 26px; overflow: visible; fill: none; stroke: #a4a4a4; }
.ic.thick { stroke-width: 2; }
.ic.pale { stroke: #bcbcbc; }
.ic.dark { stroke: #666; }
.ic.navy { stroke: #34348c; }
.gearic { width: 18px; height: 18px; }
.tiny { font-size: 8px; fill: #999; stroke: none; }
.r { font-size: 11px; fill: #999; stroke: none; }
.txt { font: bold 12px "Liberation Serif", serif; fill: #999; stroke: none; }

/* menu bar */
.menu {
  display: flex;
  align-items: center;
  gap: 15px;
  height: 31px;
  margin-top: 2px;
  padding: 0 0 4px 9px;
  background: #c6d5d6;
  font-size: 13px;
  white-space: nowrap;
}
.menu .app-mark { width: 20px; height: 20px; margin-right: -9px; }
.menu .wide { margin-left: 7px; }
.menu .winctl { margin-left: auto; padding-right: 8px; }
.winctl svg { width: 54px; height: 16px; }

/* toolbars */
.bar { display: flex; flex: none; height: 39px; background: #fdfdfd; }
.group {
  display: flex;
  align-items: center;
  border-right: 1px solid #d4d4d4;
  border-bottom: 1px solid #d8d8d8;
}
.grip {
  flex: none;
  width: 3px;
  height: 30px;
  margin: 0 3px 0 4px;
  background: radial-gradient(circle, #aaa 1px, transparent 2px) 0 0 / 3px 5px;
}
.t {
  display: flex;
  flex: none;
  align-items: center;
  justify-content: center;
  width: 36px;
  height: 36px;
}
.sep { flex: none; width: 6px; height: 30px; background: linear-gradient(#d0d0d0, #d0d0d0) 3px 0 / 1px 100% no-repeat; }
.drop { display: flex; flex: none; justify-content: center; align-items: center; width: 14px; height: 36px; }
.drop::after, .combo::after {
  content: "";
  width: 6px;
  height: 4px;
  background: #222;
  clip-path: polygon(0 0, 100% 0, 50% 100%);
}
.drop.low { width: 20px; padding-top: 16px; }
.drop.slim { width: 12px; }
.drop.near { width: 10px; margin-right: 2px; }
.start { display: flex; align-items: center; gap: 5px; padding-left: 4px; font-size: 13px; }
.glyph-a { color: #999; font: bold 28px "Liberation Serif", serif; }

.find { display: flex; align-items: center; width: 144px; height: 23px; margin-left: 5px; border: 1px solid #aaa; background: #fff; }
.find input { flex: 1; min-width: 0; padding: 0 2px; border: 0; outline: 0; background: none; color: #222; font: inherit; font-size: 13px; }
.find svg { width: 20px; height: 18px; }

.even .first { flex: none; width: 609px; }
.even .t { flex: 1 1 0; width: auto; min-width: 0; }
.even .drop.low { width: 16px; }
.grow { flex: 1; }
.tail { display: flex; flex: none; flex-direction: column; align-items: flex-end; width: 45px; padding-right: 3px; }
.tail b { height: 16px; font-size: 16px; line-height: 14px; }
.tail .drop { height: 16px; }

.filter { align-items: center; height: 39px; padding-left: 6px; border-bottom: 2px solid #aeb4b4; }
.filter .t { width: 35px; }
.filter .tail { margin-left: auto; padding-top: 16px; }
.combo { position: relative; display: flex; align-items: center; width: 153px; height: 23px; margin-right: 8px; }
.combo select {
  width: 100%;
  height: 100%;
  padding: 0 3px;
  appearance: none;
  border: 1px solid #aaa;
  border-radius: 0;
  background: #fff;
  color: #999;
  opacity: 1;
  font: inherit;
  font-size: 13px;
}
.combo::after { position: absolute; right: 7px; width: 8px; background: #999; }
.combo.scope { width: 161px; margin-right: 4px; }
.combo.layer { width: 54px; margin: 0 4px; }
.combo.layer select { color: #222; }
.combo.layer::after { background: #222; }

/* work area */
.work { display: flex; flex: 1; min-height: 0; }
.view { position: relative; flex: 1; min-width: 0; overflow: hidden; background: #333; }
.model { width: 100%; height: 100%; }
.axis { fill: #288040; font-size: 14px; }
.brand {
  position: absolute;
  left: 139px;
  bottom: 0;
  display: flex;
  flex-direction: column;
  align-items: center;
  width: 140px;
  height: 138px;
  padding: 3px 0 0 6px;
  background: #fff;
  color: #222;
  white-space: nowrap;
}
.brand svg { width: 140px; height: 84px; }
.brand strong { font-size: 25px; font-weight: 500; line-height: 30px; }
.brand span { font: 600 10px/16px "Liberation Sans", sans-serif; }
.motto {
  position: absolute;
  left: 324px;
  bottom: 48px;
  color: #f4f4f4;
  font-family: "Noto Sans CJK SC", sans-serif;
  font-size: 29px;
  font-weight: 300;
  line-height: 38px;
  white-space: nowrap;
}
.motto.second { left: 536px; bottom: 10px; }

.side-tools {
  display: flex;
  flex-direction: column;
  align-items: center;
  justify-content: flex-end;
  width: 40px;
  border-right: 1px solid #999;
}
.rule { width: 30px; height: 1px; margin: 2px 0 3px; background: #ccc; }
.back { width: 4px; height: 6px; margin: 6px 20px 5px 0; background: #222; clip-path: polygon(100% 0, 100% 100%, 0 50%); }

.navigator { display: flex; flex-direction: column; width: 509px; padding: 0 8px 8px 11px; }
.navigator h2 { display: flex; align-items: center; gap: 12px; height: 34px; padding-left: 5px; }
.navigator h2 svg { width: 12px; height: 14px; }
.grid { display: flex; flex: 1; flex-direction: column; min-height: 0; border: 1px solid #ddd; border-bottom: 2px solid #bbb; }
.rows { flex: 1; min-height: 0; overflow: hidden; }
table { width: 100%; table-layout: fixed; border-spacing: 0; }
.c-tool { width: 97px; }
.c-path { width: 45px; }
.c-stock { width: 57px; }
th { height: 24px; padding: 0 7px; border-right: 1px solid #d4d4d4; border-bottom: 1px solid #ccc; background: #f0f0f0; font-weight: 400; line-height: 20px; text-align: left; }
td { height: 23px; padding: 0 5px; border-right: 1px solid #e2e2e2; border-bottom: 1px solid #e6e6e6; line-height: 22px; white-space: nowrap; }
td:first-child { padding: 0 0 0 1px; border-right: 1px solid #222; }
td:nth-child(3) { padding-left: 6px; }
tbody tr:nth-child(even) { background: #f8f8f8; }
.op { color: #8fb0a4; }
.node { display: flex; align-items: center; height: 22px; }
.node.root { padding-left: 6px; }
.g { flex: none; width: 22px; height: 23px; }
.s { width: 18px; height: 18px; }
.node .s:last-of-type { margin-right: 4px; }
.hscroll { display: flex; align-items: center; gap: 6px; height: 26px; padding: 0 4px 5px; background: #fafafa; }
.hscroll svg { width: 10px; height: 12px; fill: none; stroke: #444; stroke-width: 2; }
.hscroll svg:last-child { margin-left: auto; }
.hscroll i { width: 50%; height: 18px; background: #cdcdcd; }

.tabs { display: flex; flex-direction: column; width: 37px; background: #dadada; }
.tabs button { display: flex; flex: none; align-items: center; justify-content: center; height: 48px; padding-right: 3px; }
.tabs .opt { height: 50px; align-items: flex-start; padding: 6px 0 0 1px; }
.tabs .active { height: 50px; margin: -1px 3px -1px 0; padding: 0; background: #fff; }
.tabs .apart { margin-top: 14px; }
.overflow { width: 36px; height: 90px; fill: none; }

.bottom { height: 39px; border-bottom: 1px solid #aaa; }
.status { display: flex; align-items: center; height: 26px; padding: 0 64px 3px 4px; color: #222; font-size: 13px; font-weight: 700; }
.status span { flex: 0 0 720px; white-space: nowrap; }
.status svg { width: 18px; height: 18px; margin-left: auto; }
.status span + span { flex: none; }

/* dialog floating over the work area */
.dialog { position: absolute; left: 650px; top: 150px; width: 376px; background: #e7e7e7; border-right: 1px solid #bbb; border-bottom: 1px solid #bbb; }
.dialog header { display: flex; align-items: center; gap: 11px; height: 28px; padding: 0 9px 0 7px; background: #5b8687; color: #fff; }
.close { margin-left: auto; }
.close svg { width: 16px; height: 16px; }
.choices { display: grid; grid-auto-rows: 1fr; gap: 3px; height: 389px; margin: 9px 11px 0; }
.choices button { border: 1px solid #b0b0b0; padding-right: 4px; }
.choices .hot { border-color: #eed48c; background: #fdf2d4; color: #3c7c94; }
.choices .focus { outline: 1px dotted #333; outline-offset: -5px; }
.actions { display: flex; justify-content: flex-end; gap: 6px; padding: 16px 17px 11px; }
.actions button { width: 62px; height: 29px; border: 1px solid #aaa; background: #c9cbcf; }
.actions .primary { border-color: #5090b8; background: #96c8e6; }
.spot { position: absolute; left: 178px; top: 189px; width: 70px; height: 70px; mix-blend-mode: multiply; }
.ink { position: absolute; left: 135px; top: 185px; width: 110px; height: 75px; }
```
